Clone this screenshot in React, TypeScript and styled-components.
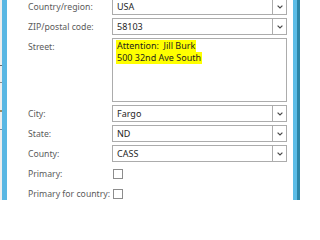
import * as React from "react";
import styled, {createGlobalStyle} from "styled-components";

const rowHeight = 17; // every single-line field row, boxes included
const streetHeight = 64;
const labelColor = "#5b5b5b";
const valueColor = "#1e1e1e";
const boxBorder = "#acacac";

const GlobalStyle = createGlobalStyle`
	html, body {
		margin: 0;
		padding: 0;
		background: #ffffff;
	}
	body {
		font-family: "Noto Sans", "Open Sans", sans-serif;
		font-size: 9px;
	}
`;

const Window = styled.div`
	display: flex;
	width: 300px;
	height: 200px;
	overflow: hidden;
	background: #ffffff;
`;

const BehindEdge = styled.div`
	width: 2px;
	flex-shrink: 0;
	background: linear-gradient(
		to bottom,
		#eeeeee 0 65px,
		#6a6a6a 65px 66px,
		#eeeeee 66px 82px,
		#8a8a8a 82px 83px,
		#eeeeee 83px 110px,
		#a08a60 110px 112px,
		#eeeeee 112px 129px,
		#7a8aa0 129px 130px,
		#eeeeee 130px
	);
`;

const Frame = styled.div<{$width: number; $color: string}>`
	width: ${({$width}) => $width}px;
	flex-shrink: 0;
	background: ${({$color}) => $color};
`;

const Form = styled.div`
	flex: 1;
	display: grid;
	grid-template-columns: 84px 175px;
	row-gap: 3px;
	align-content: start;
	margin-top: -2px;
	padding: 0 6px 0 21px;
`;

const Label = styled.div<{$top?: boolean}>`
	display: flex;
	align-items: ${({$top}) => ($top ? "flex-start" : "center")};
	padding-top: ${({$top}) => ($top ? "3px" : "0")};
	height: ${rowHeight}px;
	color: ${labelColor};
	font-size: 8.7px;
	line-height: 12px;
	white-space: nowrap;
`;

const Box = styled.div`
	box-sizing: border-box;
	display: flex;
	align-items: center;
	height: ${rowHeight}px;
	border: 1px solid ${boxBorder};
	background: #ffffff;
	color: ${valueColor};
`;

const Value = styled.span`
	flex: 1;
	padding-left: 4px;
	line-height: 12px;
`;

const DropButton = styled.span`
	display: flex;
	align-items: center;
	justify-content: center;
	width: 13px;
	align-self: stretch;
	border-left: 1px solid ${boxBorder};
`;

const TextArea = styled(Box)`
	height: ${streetHeight}px;
	align-items: flex-start;
	flex-direction: column;
	padding: 1px 0 0 3px;
`;

const Highlight = styled.span`
	background: #ffff00;
	color: ${valueColor};
	line-height: 12px;
	padding: 0 1px;
	white-space: pre;
`;

const CheckCell = styled.div`
	display: flex;
	align-items: center;
	height: ${rowHeight}px;
	padding-left: 1px;
`;

const CheckBox = styled.span`
	box-sizing: border-box;
	width: 10px;
	height: 10px;
	border: 1px solid #8c8c8c;
	background: #ffffff;
`;

const Chevron = () => (
	<svg width="6" height="4" viewBox="0 0 6 4">
		<path d="M0.6 0.6 L3 3 L5.4 0.6" fill="none" stroke="#4a4a4a" strokeWidth="1.2" />
	</svg>
);

const Select = ({value}: {value: string}) => (
	<Box>
		<Value>{value}</Value>
		<DropButton>
			<Chevron />
		</DropButton>
	</Box>
);

export default function App() {
	return (
		<Window>
			<GlobalStyle />
			<BehindEdge />
			<Frame $width={5} $color="#5ab7e3" />
			<Form>
				<Label>Country/region:</Label>
				<Select value="USA" />

				<Label>ZIP/postal code:</Label>
				<Select value="58103" />

				<Label $top>Street:</Label>
				<TextArea>
					<Highlight>{"Attention:  Jill Burk"}</Highlight>
					<Highlight>{"500 32nd Ave South"}</Highlight>
				</TextArea>

				<Label>City:</Label>
				<Select value="Fargo" />

				<Label>State:</Label>
				<Select value="ND" />

				<Label>County:</Label>
				<Select value="CASS" />

				<Label>Primary:</Label>
				<CheckCell>
					<CheckBox />
				</CheckCell>

				<Label>Primary for country:</Label>
				<CheckCell>
					<CheckBox />
				</CheckCell>
			</Form>
			<Frame $width={4} $color="#5cbde7" />
			<Frame $width={3} $color="#2c86a8" />
		</Window>
	);
}
